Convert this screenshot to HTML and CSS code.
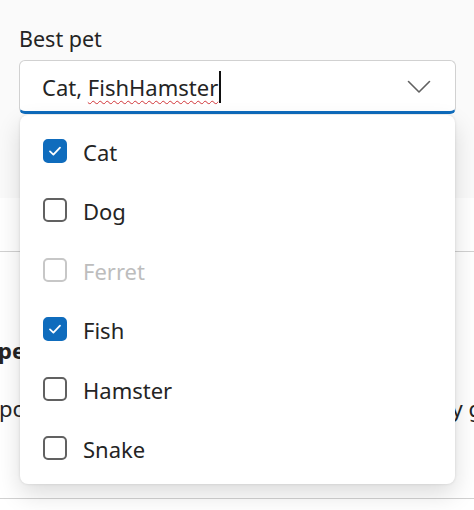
FILE: index.html
```html
<!DOCTYPE html>
<html lang="en">
<head>
<meta charset="utf-8">
<link rel="stylesheet" href="styles.css">
</head>
<body>
<div class="page">
  <div class="top">
    <label class="field-label" for="pet">Best pet</label>
    <div class="combo-wrap">
      <div class="combo">
        <span class="combo-text">Cat, <span class="misspelled">FishHamster</span><span class="caret"></span></span>
        <svg class="chevron" width="24" height="14" viewBox="0 0 24 14"><path d="M1.5 1.5 L12 12 L22.5 1.5" fill="none" stroke="#616161" stroke-width="1.6" stroke-linecap="round" stroke-linejoin="round"/></svg>
      </div>
      <div class="listbox" role="listbox">
        <div class="option"><span class="box checked"><svg width="18" height="18" viewBox="0 0 18 18"><path d="M4 9.4 L7.4 12.6 L14 5.6" fill="none" stroke="#fff" stroke-width="1.8" stroke-linecap="round" stroke-linejoin="round"/></svg></span><span class="opt-text">Cat</span></div>
        <div class="option"><span class="box"></span><span class="opt-text">Dog</span></div>
        <div class="option disabled"><span class="box"></span><span class="opt-text">Ferret</span></div>
        <div class="option"><span class="box checked"><svg width="18" height="18" viewBox="0 0 18 18"><path d="M4 9.4 L7.4 12.6 L14 5.6" fill="none" stroke="#fff" stroke-width="1.8" stroke-linecap="round" stroke-linejoin="round"/></svg></span><span class="opt-text">Fish</span></div>
        <div class="option"><span class="box"></span><span class="opt-text">Hamster</span></div>
        <div class="option"><span class="box"></span><span class="opt-text">Snake</span></div>
      </div>
    </div>
  </div>
  <div class="section">
    <h3 class="behind-heading">pe</h3>
    <div class="behind-row"><span>po</span><span class="right-frag">y g</span></div>
  </div>
  <div class="bottom-line"></div>
</div>
</body>
</html>
```

FILE: styles.css
```css
html, body {
  margin: 0;
  padding: 0;
  background: #ffffff;
  overflow: hidden;
}
body {
  font-family: "Noto Sans", "Open Sans", sans-serif;
  color: #242424;
  width: 474px;
  height: 510px;
}
.page {
  position: relative;
  width: 474px;
  height: 510px;
}
.top {
  background: #fafafa;
  height: 198px;
  box-sizing: border-box;
  padding: 24px 18px 0 19px;
}
.field-label {
  display: block;
  font-size: 21.5px;
  line-height: 30px;
  height: 36px;
}
.combo-wrap {
  position: relative;
}
.combo {
  height: 54px;
  box-sizing: border-box;
  border: 1px solid #d1d1d1;
  border-bottom: 3px solid #0f6cbd;
  border-radius: 6px;
  background: #fff;
  display: flex;
  align-items: center;
  justify-content: space-between;
  padding: 0 24px 0 22px;
}
.combo-text {
  font-size: 22px;
  line-height: 32px;
  display: flex;
  align-items: center;
  white-space: pre;
  margin-top: 1px;
}
.misspelled {
  text-decoration: underline wavy #d13438;
  text-decoration-thickness: 1.2px;
  text-underline-offset: 4px;
}
.caret {
  display: inline-block;
  width: 1.5px;
  height: 32px;
  background: #111;
  margin-left: 1px;
}
.chevron {
  display: block;
  margin-top: 2px;
}
.listbox {
  position: absolute;
  left: 1px;
  top: 55px;
  width: 435px;
  box-sizing: border-box;
  background: #fff;
  border-radius: 8px;
  padding: 6px 0;
  box-shadow: 0 0 3px rgba(0,0,0,0.12), 0 10px 24px rgba(0,0,0,0.14);
  z-index: 5;
}
.option {
  height: 59.5px;
  display: flex;
  align-items: center;
  padding-left: 23px;
  gap: 16px;
}
.box {
  width: 24px;
  height: 24px;
  box-sizing: border-box;
  border: 2px solid #616161;
  border-radius: 5px;
  display: flex;
  align-items: center;
  justify-content: center;
}
.box.checked {
  background: #0f6cbd;
  border-color: #0f6cbd;
}
.opt-text {
  font-size: 22px;
  line-height: 28px;
  margin-top: 2px;
}
.disabled .box {
  border-color: #c7c7c7;
}
.disabled .opt-text {
  color: #bdbdbd;
}
.section {
  margin-top: 53px;
  border-top: 1.5px solid #d1d1d1;
  height: 247px;
  box-sizing: border-box;
}
.behind-heading {
  margin: 84px 0 0 -2px;
  font-size: 22px;
  line-height: 28px;
  font-weight: 700;
  white-space: nowrap;
}
.behind-row {
  margin-top: 30px;
  font-size: 22px;
  line-height: 28px;
  display: flex;
  justify-content: space-between;
  white-space: nowrap;
  margin-left: -1px;
  margin-right: -8px;
}
.right-frag {
  letter-spacing: 0;
}
.bottom-line {
  border-top: 1.5px solid #d1d1d1;
}
```
